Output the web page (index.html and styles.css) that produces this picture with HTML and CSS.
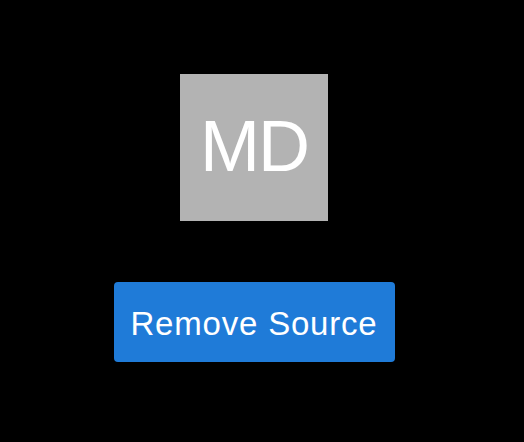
FILE: index.html
```html
<html lang="en">
<head>
    <meta charset="utf-8" />
    <title>Source</title>
    <link rel="stylesheet" href="styles.css">
</head>
<body>
<div class="source">
    <div class="avatar">MD</div>
    <button class="remove">Remove Source</button>
</div>
</body>
</html>
```
FILE: styles.css
```css
html, body {
    margin: 0;
    background: black;
    font-family: 'Liberation Sans', Arial, sans-serif;
}

div.source {
    display: flex;
    flex-direction: column;
    align-items: center;
    width: 508px;
    padding-top: 74px;
    gap: 61px;
}

div.avatar {
    width: 148px;
    height: 147px;
    background: #b3b3b3;
    color: white;
    font-size: 72px;
    letter-spacing: -2px;
    display: flex;
    align-items: center;
    justify-content: center;
    padding-bottom: 4px;
    box-sizing: border-box;
}

button.remove {
    width: 281px;
    height: 80px;
    border: none;
    border-radius: 4px;
    background: #1f7bd8;
    color: white;
    font-family: 'Liberation Sans', Arial, sans-serif;
    font-size: 33px;
    letter-spacing: 0.8px;
    padding: 0;
    padding-top: 3px;
}
```
